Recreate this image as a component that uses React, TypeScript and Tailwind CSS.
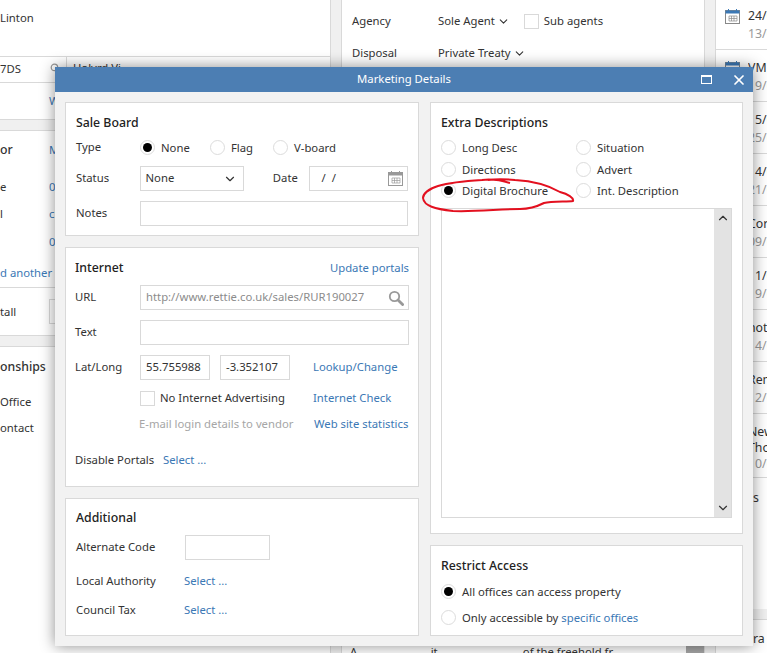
import { ChevronDown, ChevronUp, X } from "lucide-react";
import type { ReactNode } from "react";

const font = "font-['Noto_Sans','Open_Sans',sans-serif]";

function Radio({ on, label }: { on?: boolean; label?: ReactNode }) {
  return (
    <span className="flex items-center gap-[6px] whitespace-nowrap text-[11.3px] leading-[17px] text-[#333]">
      <span className="flex size-[15px] shrink-0 items-center justify-center rounded-full border border-[#dcdcdc] bg-white">
        {on && <span className="size-[9px] rounded-full bg-black" />}
      </span>
      {label}
    </span>
  );
}

function Input({ className, children }: { className?: string; children?: ReactNode }) {
  return (
    <div className={`flex h-[25px] items-center border border-[#d9d9d9] bg-white px-[5px] text-[11.3px] text-[#333] ${className ?? ""}`}>
      {children}
    </div>
  );
}

function Link({ children, className }: { children: ReactNode; className?: string }) {
  return <span className={`whitespace-nowrap text-[11.3px] text-[#3b78b5] ${className ?? ""}`}>{children}</span>;
}

function Label({ children, className }: { children: ReactNode; className?: string }) {
  return <span className={`whitespace-nowrap text-[11.3px] text-[#333] ${className ?? ""}`}>{children}</span>;
}

function Panel({ className, children }: { className?: string; children: ReactNode }) {
  return <section className={`border border-[#d9d9d9] bg-white ${className ?? ""}`}>{children}</section>;
}

function Title({ children }: { children: ReactNode }) {
  return <h3 className="text-[12.3px] font-medium leading-[18px] text-[#222]">{children}</h3>;
}

function CalendarIcon({ color = "#999", top = "#999" }: { color?: string; top?: string }) {
  return (
    <svg width="15" height="15" viewBox="0 0 15 15" fill="none">
      <rect x="0.5" y="1.5" width="14" height="13" stroke={color} fill="#fff" />
      <rect x="0.5" y="1.5" width="14" height="3" fill={top} />
      <path d="M3.5 0v3M11.5 0v3" stroke={top} />
      <path d="M4 7h8v5H4zM6.5 7v5M9 7v5M4 9.5h8" stroke={color} strokeWidth="0.7" />
    </svg>
  );
}

function SearchIcon({ size = 16 }: { size?: number }) {
  return (
    <svg width={size} height={size} viewBox="0 0 16 16" fill="none" stroke="#999">
      <circle cx="6.5" cy="6.5" r="4.7" strokeWidth="1.8" />
      <path d="M10 10l4.6 4.6" strokeWidth="2.8" strokeLinecap="round" />
    </svg>
  );
}

// what shows around the dialog
function Backdrop() {
  const recent = [
    ["24/0", "13/0"],
    ["VM", "19/0"],
    ["15/0", "25/0"],
    ["14/0", "21/0"],
    ["Cor", "09/0"],
    ["11/0", "19/0"],
    ["not", "14/0"],
    ["Rem", "12/0"],
  ];
  return (
    <div className="flex h-[653px] w-[767px] overflow-hidden bg-[#f0f0f0]">
      <div className="flex w-[331px] shrink-0 flex-col">
        <div className="h-[120px] border-r border-b border-[#d9d9d9] bg-white">
          <div className="h-[56px] pt-[10px] text-[11.3px] leading-[16px] text-[#333]">Linton</div>
          <div className="flex h-[27px] border-y border-[#d9d9d9]">
            <span className="flex w-[67px] items-center justify-between border-r border-[#d9d9d9] pr-[5px] pb-[3px] text-[11.3px] text-[#333]">
              <span className="pt-[3px]">7DS</span>
              <SearchIcon size={11} />
            </span>
            <span className="pl-[6px] pt-[2px] text-[11.3px] leading-[18px] text-[#333]">Holyrd Vi</span>
          </div>
          <div className="pl-[49px] pt-[10px] text-[11.3px] text-[#3b78b5]">W</div>
        </div>
        <div className="mt-[10px] h-[206px] border-y border-r border-[#d9d9d9] bg-white text-[11.3px] text-[#333]">
          <div className="h-[157px] border-b border-[#d9d9d9] pt-[10px]">
            <div className="flex h-[18px] items-center text-[12.3px] font-medium">
              <span className="w-[49px]">or</span>
              <span className="text-[11.3px] font-normal text-[#3b78b5]">M</span>
            </div>
            <div className="mt-[19px] flex h-[18px] items-center">
              <span className="w-[49px]">e</span>
              <span className="text-[#3b78b5]">0</span>
            </div>
            <div className="mt-[9px] flex h-[18px] items-center">
              <span className="w-[49px]">l</span>
              <span className="text-[#3b78b5]">c</span>
            </div>
            <div className="mt-[10px] flex h-[18px] items-center pl-[49px] text-[#3b78b5]">0</div>
            <div className="mt-[13px] h-[18px] leading-[18px] text-[#3b78b5]">d another</div>
          </div>
          <div className="flex h-[47px] items-center">
            <span className="w-[49px] pt-[1px]">tall</span>
            <span className="h-[25px] w-[20px] border border-[#d9d9d9]" />
          </div>
        </div>
        <div className="mt-[10px] flex-1 border-t border-r border-[#d9d9d9] bg-white pt-[10px] text-[11.3px] text-[#333]">
          <div className="text-[12.3px] font-medium leading-[20px]">onships</div>
          <div className="mt-[17px] leading-[16px]">Office</div>
          <div className="mt-[10px] leading-[16px]">ontact</div>
        </div>
      </div>
      <div className="ml-[10px] flex w-[364px] shrink-0 flex-col border-x border-[#d9d9d9] bg-white">
        <div className="flex h-[32px] items-center pl-[10px] pt-[10px] text-[11.3px] text-[#333]">
          <span className="w-[86px]">Agency</span>
          <span>Sole Agent</span>
          <ChevronDown size={13} className="ml-[2px]" />
          <span className="ml-[14px] size-[15px] border border-[#d9d9d9]" />
          <span className="ml-[5px]">Sub agents</span>
        </div>
        <div className="flex h-[32px] items-center pl-[10px] pt-[10px] text-[11.3px] text-[#333]">
          <span className="w-[86px]">Disposal</span>
          <span>Private Treaty</span>
          <ChevronDown size={13} className="ml-[2px]" />
        </div>
        <div className="flex-1" />
        <div className="flex h-[9px] justify-between overflow-hidden pl-[8px]">
          <span className="whitespace-pre text-[11.3px] leading-[16px] text-[#333]">A                         it                             of the freehold fr</span>
          <span className="h-[9px] w-[18px] bg-[#a6a6a6]" />
        </div>
      </div>
      <div className="ml-[10px] flex flex-1 flex-col border-l border-[#d9d9d9]">
        <div className="h-[609px] bg-white">
          {recent.map(([a, b], i) => (
            <div key={i} className={`flex justify-between overflow-hidden border-b border-[#d9d9d9] pl-[9px] text-[12.3px] leading-[18px] ${i === 0 ? "h-[50px] pt-[7px]" : "h-[52px] pt-[9px]"}`}>
              {i === 0 && <span className="pt-[2px]"><CalendarIcon color="#888" top="#3b78b5" /></span>}
              {i === 1 && <span className="pt-[2px]"><CalendarIcon color="#888" top="#3b78b5" /></span>}
              {i > 1 && <span />}
              <div className="w-[19px] shrink-0 overflow-hidden whitespace-nowrap">
                <div className="text-[#333]">{a}</div>
                <div className="text-[#999]">{b}</div>
              </div>
            </div>
          ))}
          <div className="flex h-[64px] justify-end overflow-hidden border-b border-[#d9d9d9] text-[12.3px] leading-[16px]">
            <div className="w-[19px] overflow-hidden whitespace-nowrap pt-[10px] text-[#333]">
              <div>New</div>
              <div>Tho</div>
              <div className="text-[#999]">10/0</div>
            </div>
          </div>
          <div className="flex justify-end pt-[11px] text-[12.3px] text-[#333]">
            <span className="w-[14px]">s</span>
          </div>
        </div>
        <div className="mt-[10px] flex flex-1 justify-end border-t border-[#d9d9d9] bg-white pt-[10px] text-[12.3px] text-[#333]">
          <span className="w-[14px]">ra</span>
        </div>
      </div>
    </div>
  );
}

function Dialog() {
  return (
    <div className="absolute top-[67px] left-[55px] flex h-[579px] w-[698px] flex-col bg-[#f2f2f2] shadow-[0_0_14px_rgba(0,0,0,0.45)]">
      <header className="relative flex h-[25px] shrink-0 items-center justify-center bg-[#4c7eb3] text-[11.3px] text-white">
        Marketing Details
        <span className="absolute right-[41px] h-[9px] w-[11px] border border-t-2 border-white" />
        <X size={16} strokeWidth={2.6} className="absolute right-[6px]" />
      </header>
      <div className="flex flex-1 gap-[11px] p-[10px]">
        <div className="flex w-[354px] flex-col gap-[11px]">
          <Panel className="h-[134px] px-[10px] pt-[11px]">
            <Title>Sale Board</Title>
            <div className="mt-[7px] flex h-[16px] items-center">
              <Label className="w-[64px]">Type</Label>
              <div className="w-[70px]"><Radio on label="None" /></div>
              <div className="w-[63px]"><Radio label="Flag" /></div>
              <Radio label="V-board" />
            </div>
            <div className="mt-[11px] flex items-center">
              <Label className="w-[64px]">Status</Label>
              <Input className="w-[105px] justify-between pr-[6px]">None<ChevronDown size={14} /></Input>
              <Label className="ml-[29px] w-[36px]">Date</Label>
              <Input className="w-[100px] justify-between pl-[12px] pr-[4px]"><span className="whitespace-pre">/  /</span><CalendarIcon /></Input>
            </div>
            <div className="mt-[10px] flex items-center">
              <Label className="w-[64px]">Notes</Label>
              <Input className="w-[269px]" />
            </div>
          </Panel>
          <Panel className="h-[240px] px-[9px] pt-[11px]">
            <div className="flex items-center justify-between">
              <Title>Internet</Title>
              <Link>Update portals</Link>
            </div>
            <div className="mt-[8px] flex items-center">
              <Label className="w-[65px]">URL</Label>
              <Input className="w-[269px] justify-between pr-[4px]">
                <span className="text-[#8c8c8c]">http://www.rettie.co.uk/sales/RUR190027</span>
                <SearchIcon />
              </Input>
            </div>
            <div className="mt-[10px] flex items-center">
              <Label className="w-[65px]">Text</Label>
              <Input className="w-[269px]" />
            </div>
            <div className="mt-[10px] flex items-center">
              <Label className="w-[65px]">Lat/Long</Label>
              <Input className="w-[70px]">55.755988</Input>
              <Input className="ml-[10px] w-[70px]">-3.352107</Input>
              <Link className="ml-[23px]">Lookup/Change</Link>
            </div>
            <div className="mt-[11px] flex h-[15px] items-center">
              <span className="ml-[65px] size-[15px] border border-[#d9d9d9]" />
              <Label className="ml-[5px] w-[153px]">No Internet Advertising</Label>
              <Link>Internet Check</Link>
            </div>
            <div className="mt-[10px] flex h-[16px] items-center">
              <span className="ml-[64px] w-[175px] whitespace-nowrap text-[11.3px] text-[#a6a6a6]">E-mail login details to vendor</span>
              <Link>Web site statistics</Link>
            </div>
            <div className="mt-[20px] flex items-center">
              <Label className="w-[88px]">Disable Portals</Label>
              <Link>Select ...</Link>
            </div>
          </Panel>
          <Panel className="flex-1 px-[10px] pt-[10px]">
            <Title>Additional</Title>
            <div className="mt-[8px] flex items-center">
              <Label className="w-[109px]">Alternate Code</Label>
              <Input className="w-[85px]" />
            </div>
            <div className="mt-[11px] flex h-[20px] items-center">
              <Label className="w-[108px]">Local Authority</Label>
              <Link>Select ...</Link>
            </div>
            <div className="mt-[9px] flex h-[20px] items-center">
              <Label className="w-[108px]">Council Tax</Label>
              <Link>Select ...</Link>
            </div>
          </Panel>
        </div>
        <div className="flex flex-1 flex-col gap-[11px]">
          <Panel className="flex h-[432px] flex-col px-[10px] pt-[11px]">
            <Title>Extra Descriptions</Title>
            <div className="mt-[7px] grid h-[60px] grid-cols-[135px_1fr] content-between">
              <Radio label="Long Desc" />
              <Radio label="Situation" />
              <Radio label="Directions" />
              <Radio label="Advert" />
              <Radio on label="Digital Brochure" />
              <Radio label="Int. Description" />
            </div>
            <div className="mt-[9px] mb-[15px] flex flex-1 justify-end border border-[#d9d9d9]">
              <div className="flex w-[17px] flex-col items-center justify-between bg-[#e3e3e3] py-[2px] text-[#333]">
                <ChevronUp size={14} />
                <ChevronDown size={14} />
              </div>
            </div>
          </Panel>
          <Panel className="flex-1 px-[10px] pt-[11px]">
            <Title>Restrict Access</Title>
            <div className="mt-[8px] flex flex-col gap-[9px]">
              <Radio on label="All offices can access property" />
              <Radio label={<span>Only accessible by <span className="text-[#3b78b5]">specific offices</span></span>} />
            </div>
          </Panel>
        </div>
      </div>
    </div>
  );
}

export default function App() {
  return (
    <div className={`relative h-[653px] w-[767px] overflow-hidden ${font}`}>
      <Backdrop />
      <Dialog />
      {/* red pen mark round the selected radio */}
      <svg className="absolute top-[170px] left-[420px]" width="165" height="50" viewBox="0 0 165 50" fill="none">
        <path d="M90 13 C80 10 70 9 62 10 C45 11 28 13 18 16 C8 19 3 24 3 28 C4 36 15 39 33 41 C55 42 80 39 100 39 C110 39 118 36 124 33 C132 31 148 32 153 31 C154 28 148 24 140 22 C128 15 112 11 95 10 C85 9 75 9 68 10" stroke="#e3101f" strokeWidth="2" />
      </svg>
    </div>
  );
}
